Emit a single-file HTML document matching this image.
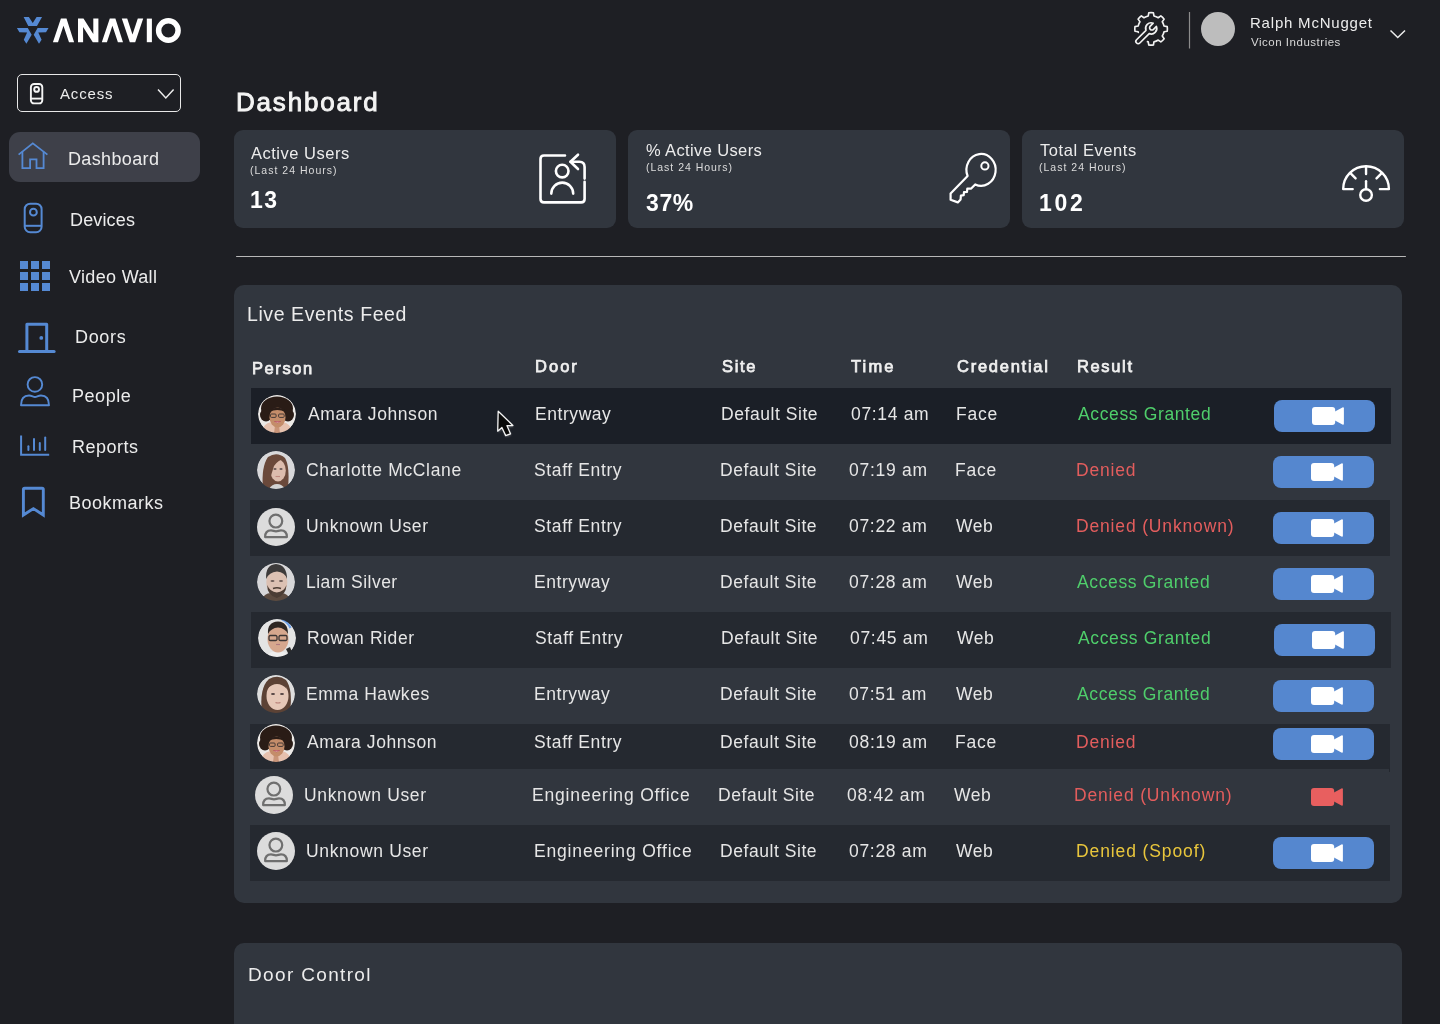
<!DOCTYPE html>
<html><head><meta charset="utf-8"><title>Anavio Dashboard</title>
<style>
html,body{margin:0;padding:0;}
body{width:1440px;height:1024px;overflow:hidden;background:#1e1f24;position:relative;font-family:"Liberation Sans", sans-serif;}
.t{position:absolute;white-space:nowrap;line-height:1;will-change:transform;}
svg{overflow:visible}
</style></head><body>
<svg width="0" height="0" style="position:absolute">
<defs>
<clipPath id="avc"><circle cx="0" cy="0" r="19"/></clipPath>
<symbol id="cam" viewBox="0 0 32 18" overflow="visible">
<rect x="0" y="0" width="23.2" height="18" rx="3"/>
<path d="M23,4.6 L30.4,0.4 Q31.9,-0.2 31.9,1.5 L31.9,16.5 Q31.9,18.2 30.4,17.6 L23,13.4 Z"/>
</symbol>
<g id="av-unknown">
<circle r="19" fill="#dcdcdc"/>
<circle cx="-0.15" cy="-5.9" r="6.4" fill="none" stroke="#6f6f6f" stroke-width="2.2"/>
<path d="M-10.9,10.1 L10.9,10.1 C10.9,5.5 8.5,3.4 5,3.4 C3,3.4 2,4.3 0,4.3 C-2,4.3 -3,3.4 -5,3.4 C-8.5,3.4 -10.9,5.5 -10.9,10.1 Z" fill="none" stroke="#6f6f6f" stroke-width="2.2" stroke-linejoin="round"/>
</g>
<filter id="soft" x="-10%" y="-10%" width="120%" height="120%"><feGaussianBlur stdDeviation="0.55"/></filter>
<g id="av-amara" clip-path="url(#avc)">
<g filter="url(#soft)">
<circle r="19" fill="#ece9e6"/>
<path d="M-16,19 Q-14,9 -5,8 L5,8 Q14,9 16,19 Z" fill="#e6c1ae"/>
<path d="M-2,12 L2,12 L3,19 L-3,19 Z" fill="#c99478"/>
<ellipse cx="0" cy="-5.5" rx="16" ry="12" fill="#2a1e19"/>
<ellipse cx="-11" cy="1" rx="6" ry="6.5" fill="#2a1e19"/>
<ellipse cx="11" cy="1" rx="6" ry="6.5" fill="#2a1e19"/>
<ellipse cx="0.5" cy="3.5" rx="8" ry="10" fill="#c48d6a"/>
<path d="M-7.5,-2 Q0,-6 8.5,-2 L8,-4 Q0,-9 -7,-4 Z" fill="#2a1e19"/>
<rect x="-6.5" y="0" width="5.6" height="3.4" rx="1" fill="none" stroke="#463a36" stroke-width="1"/>
<rect x="1.6" y="0" width="5.6" height="3.4" rx="1" fill="none" stroke="#463a36" stroke-width="1"/>
<path d="M-2.5,7.5 Q0.5,10 3.5,7.5 Z" fill="#f4e8e8" stroke="#b84a5a" stroke-width="0.7"/>
</g></g>
<g id="av-charlotte" clip-path="url(#avc)">
<g filter="url(#soft)">
<circle r="19" fill="#d8d8da"/>
<path d="M-13,19 Q-15,-3 -8,-13 Q1,-19 9,-12 Q14,-4 12,19 Z" fill="#6b4a3a"/>
<ellipse cx="2" cy="0.5" rx="7.8" ry="11" fill="#dcbcad"/>
<path d="M-9,-11 Q-1,-16 8,-11 Q2,-10 -2,-4 Q-5,4 -6,12 L-9,8 Z" fill="#6b4a3a"/>
<path d="M-7,19 Q-4,14 1,14 Q6,14 9,19 Z" fill="#d3d3d3"/>
<ellipse cx="-1" cy="-1" rx="1.6" ry="0.9" fill="#6a5a58"/>
<ellipse cx="5" cy="-1" rx="1.6" ry="0.9" fill="#6a5a58"/>
<path d="M-0.5,6.5 L4,6.5" stroke="#c08a80" stroke-width="1.1"/>
</g></g>
<g id="av-liam" clip-path="url(#avc)">
<g filter="url(#soft)">
<circle r="19" fill="#d7d7d9"/>
<path d="M-15,19 Q-12,11 -5,11 L5,11 Q12,11 15,19 Z" fill="#5b4b40"/>
<ellipse cx="0.8" cy="0" rx="10.5" ry="13.5" fill="#dcc1b3"/>
<path d="M-9.8,-3 Q-11,-17 0,-18 Q11,-17 11,-3 Q9,-10 1,-10.5 Q-7,-10 -9.8,-3 Z" fill="#3e3b3a"/>
<path d="M-8.8,3 Q-9,13 0.8,16 Q10,13 10.5,3 Q8,10 0.8,10.5 Q-6,10 -8.8,3 Z" fill="#4c3d34"/>
<path d="M-3,6.5 Q1,5 5,6.5" stroke="#4c3d34" stroke-width="1.6" fill="none"/>
<ellipse cx="-3.5" cy="-1" rx="2" ry="1" fill="#6e5e58"/>
<ellipse cx="5" cy="-1" rx="2" ry="1" fill="#6e5e58"/>
</g></g>
<g id="av-rowan" clip-path="url(#avc)">
<g filter="url(#soft)">
<circle r="19" fill="#e4e4e4"/>
<path d="M-11,19 Q-8,13 1,13 Q10,13 12,19 Z" fill="#eeeeee"/>
<path d="M9,11 L13,19 L17,19 L13,9 Z" fill="#2a2a2a"/>
<ellipse cx="1" cy="1" rx="10.5" ry="13.5" fill="#d6a78e"/>
<path d="M-9,-4 Q-10,-16 1,-16.5 Q11,-16 11,-4 Q8,-10 1,-10.5 Q-6,-10 -9,-4 Z" fill="#2e2624"/>
<path d="M5,-18.5 Q11,-16 13.5,-10" stroke="#6ea0e8" stroke-width="2.2" fill="none"/>
<rect x="-8" y="-2.5" width="8" height="5" rx="1.3" fill="none" stroke="#3b3434" stroke-width="1.3"/>
<rect x="2" y="-2.5" width="8" height="5" rx="1.3" fill="none" stroke="#3b3434" stroke-width="1.3"/>
<path d="M-1,6.5 L3,6.5" stroke="#b07a80" stroke-width="1.1"/>
</g></g>
<g id="av-emma" clip-path="url(#avc)">
<g filter="url(#soft)">
<circle r="19" fill="#dedede"/>
<path d="M-14,19 Q-17,-6 -7,-15 Q2,-20 10,-14 Q17,-5 14,19 Z" fill="#5c4236"/>
<ellipse cx="1.5" cy="2" rx="11" ry="14" fill="#e6c8b8"/>
<path d="M-9,-5 Q-6,-14 2,-14 Q9,-13 11,-5 Q6,-10 1,-10 Q-4,-10 -9,-5 Z" fill="#5c4236"/>
<ellipse cx="-3" cy="0" rx="2" ry="1" fill="#504040"/>
<ellipse cx="6" cy="0" rx="2" ry="1" fill="#504040"/>
<path d="M-0.5,8.5 Q2,9.5 4.5,8.5" stroke="#b88078" stroke-width="1.2" fill="none"/>
</g></g>
</defs></svg>
<svg style="position:absolute;left:0;top:0" width="200" height="60" viewBox="0 0 200 60">
<g fill="#5589d3">
<polygon points="23.6,16.9 28.87,16.9 32.74,22.9 36.6,16.9 42.05,16.9 36.96,25.9 28.3,25.9"/>
<polygon points="16.9,28.0 27.8,28.0 31.7,34.85 26.4,43.8 23.8,39.8 27.1,32.4 19.4,32.2"/>
<polygon points="48.5,28.0 37.6,28.0 33.7,34.85 39.0,43.8 41.6,39.8 38.3,32.4 46.0,32.2"/>
</g>
<g fill="#ffffff">
<polygon points="52.9,42.2 60.9,18.6 66.5,18.6 74.1,42.2 69,42.2 63.5,25.7 58.0,42.2"/>
<polygon points="78,42.2 78,18.6 83.5,18.6 93.3,34 93.3,18.6 98.4,18.6 98.4,42.2 92.8,42.2 83.1,27.1 83.1,42.2"/>
<polygon points="101.8,42.2 109.8,18.6 115.4,18.6 123.0,42.2 117.9,42.2 112.4,25.7 106.9,42.2"/>
<polygon points="121.8,18.6 127.2,18.6 132.5,34.4 137.8,18.6 143.2,18.6 135.2,42.2 129.8,42.2"/>
<rect x="146.8" y="18.6" width="5.1" height="23.6"/>
</g>
<circle cx="168.35" cy="30.5" r="9.75" fill="none" stroke="#ffffff" stroke-width="5.5"/>
</svg>
<div style="position:absolute;left:17px;top:74px;width:161.5px;height:35.5px;border:1.5px solid #e8e8e8;border-radius:5px;"></div>
<svg style="position:absolute;left:0;top:70px" width="200" height="50" viewBox="0 70 200 50">
<rect x="30.9" y="84" width="11.4" height="19.4" rx="3.2" fill="none" stroke="#f4f4f4" stroke-width="1.9"/>
<line x1="30.9" y1="98.6" x2="42.3" y2="98.6" stroke="#f4f4f4" stroke-width="1.9"/>
<circle cx="36.6" cy="89.4" r="2.4" fill="none" stroke="#f4f4f4" stroke-width="1.9"/>
<polyline points="158,89.5 165.8,98 173.6,89.5" fill="none" stroke="#ececec" stroke-width="1.5"/>
</svg>
<div class="t" style="left:59.70px;top:86.20px;font-size:15px;font-weight:400;color:#ececec;letter-spacing:0.820px;">Access</div>
<div style="position:absolute;left:9px;top:132px;width:191px;height:50px;background:#3e4049;border-radius:11px;"></div>
<svg style="position:absolute;left:0;top:130px" width="220" height="400" viewBox="0 130 220 400">
<g fill="none" stroke="#5589d3" stroke-width="1.8" stroke-linejoin="miter">
<polyline points="18.6,154.6 32.8,143.4 47.4,154.6"/>
<polyline points="22.4,151.8 22.4,168.1 30.1,168.1 30.1,159.3 36.5,159.3 36.5,168.1 43.6,168.1 43.6,151.8"/>
<rect x="24.7" y="203.7" width="16.9" height="28.5" rx="5.5" stroke-width="2"/>
<line x1="24.7" y1="225.8" x2="41.6" y2="225.8" stroke-width="2"/>
<circle cx="33.4" cy="212.2" r="3.4" stroke-width="2"/>
</g>
<g fill="#5589d3">
<rect x="20" y="261" width="8" height="8"/><rect x="31" y="261" width="8" height="8"/><rect x="42" y="261" width="8" height="8"/>
<rect x="20" y="272" width="8" height="8"/><rect x="31" y="272" width="8" height="8"/><rect x="42" y="272" width="8" height="8"/>
<rect x="20" y="283" width="8" height="8"/><rect x="31" y="283" width="8" height="8"/><rect x="42" y="283" width="8" height="8"/>
</g>
<g fill="none" stroke="#5589d3" stroke-linecap="round">
<polyline points="26.9,350.5 26.9,324.3 46.7,324.3 46.7,350.5" stroke-width="3" stroke-linejoin="round"/>
<line x1="19.5" y1="351.6" x2="54.1" y2="351.6" stroke-width="3"/>
<circle cx="34.9" cy="384.4" r="7.3" stroke-width="1.9"/>
<path d="M21,405.2 L49,405.2 C49,399 46,395.5 41,395.5 C38,395.5 37,397 35,397 C33,397 32,395.5 29,395.5 C24,395.5 21,399 21,405.2 Z" stroke-width="1.9" stroke-linejoin="round"/>
<polyline points="21.1,435.5 21.1,454.8 49.2,454.8" stroke-width="2" stroke-linecap="butt"/>
<line x1="28.4" y1="446.3" x2="28.4" y2="450" stroke-width="2"/>
<line x1="34" y1="439" x2="34" y2="450" stroke-width="2"/>
<line x1="39.8" y1="442.9" x2="39.8" y2="450" stroke-width="2"/>
<line x1="45.2" y1="437.5" x2="45.2" y2="450" stroke-width="2"/>
<path d="M23.4,515 L23.4,489.6 Q23.4,488.3 24.7,488.3 L42,488.3 Q43.3,488.3 43.3,489.6 L43.3,515 L33.4,508.6 Z" stroke-width="2.9" stroke-linecap="butt" stroke-linejoin="miter"/>
</g>
<circle cx="41.3" cy="337.9" r="1.9" fill="#5589d3"/>
</svg>
<div class="t" style="left:67.60px;top:150.06px;font-size:18px;font-weight:400;color:#ececec;letter-spacing:0.363px;">Dashboard</div>
<div class="t" style="left:70.30px;top:210.86px;font-size:18px;font-weight:400;color:#ececec;letter-spacing:0.150px;">Devices</div>
<div class="t" style="left:69.40px;top:267.86px;font-size:18px;font-weight:400;color:#ececec;letter-spacing:0.322px;">Video Wall</div>
<div class="t" style="left:75.10px;top:328.36px;font-size:18px;font-weight:400;color:#ececec;letter-spacing:0.675px;">Doors</div>
<div class="t" style="left:72.30px;top:387.36px;font-size:18px;font-weight:400;color:#ececec;letter-spacing:0.540px;">People</div>
<div class="t" style="left:72.30px;top:438.26px;font-size:18px;font-weight:400;color:#ececec;letter-spacing:0.483px;">Reports</div>
<div class="t" style="left:69.30px;top:493.96px;font-size:18px;font-weight:400;color:#ececec;letter-spacing:0.500px;">Bookmarks</div>
<svg style="position:absolute;left:1120px;top:0" width="320" height="60" viewBox="1120 0 320 60">
<g fill="none" stroke="#f2f2f2" stroke-width="1.65" stroke-linejoin="round" stroke-linecap="round">
<path d="M1138.30,32.33 A13.25,13.25 0 0 1 1138.16,31.75 L1134.97,31.22 A16.3,16.3 0 0 1 1134.97,26.58 L1138.16,26.05 A13.25,13.25 0 0 1 1139.94,21.76 L1138.05,19.14 A16.3,16.3 0 0 1 1141.34,15.85 L1143.96,17.74 A13.25,13.25 0 0 1 1148.25,15.96 L1148.78,12.77 A16.3,16.3 0 0 1 1153.42,12.77 L1153.95,15.96 A13.25,13.25 0 0 1 1158.24,17.74 L1160.86,15.85 A16.3,16.3 0 0 1 1164.15,19.14 L1162.26,21.76 A13.25,13.25 0 0 1 1164.04,26.05 L1167.23,26.58 A16.3,16.3 0 0 1 1167.23,31.22 L1164.04,31.75 A13.25,13.25 0 0 1 1162.26,36.04 L1164.15,38.66 A16.3,16.3 0 0 1 1160.86,41.95 L1158.24,40.06 A13.25,13.25 0 0 1 1153.95,41.84 L1153.42,45.03 A16.3,16.3 0 0 1 1148.78,45.03 L1148.25,41.84 A13.25,13.25 0 0 1 1147.45,41.64"/>
<g transform="translate(1151.2,28.4) rotate(-45)"><path d="M-5.1,-2.3 L-18.4,-2.3 A2.3,2.3 0 0 0 -18.4,2.3 L-5.1,2.3 A5.6,5.6 0 0 0 5.1,2.3 L1.0,2.3 A2.3,2.3 0 0 1 1.0,-2.3 L5.1,-2.3 A5.6,5.6 0 0 0 -5.1,-2.3 Z"/></g>
</g>
<line x1="1189.5" y1="12" x2="1189.5" y2="48.5" stroke="#8c8c8c" stroke-width="1.2"/>
<circle cx="1218" cy="29" r="17" fill="#bdbdbd"/>
<polyline points="1390.5,30.5 1397.75,37.5 1405,30.5" fill="none" stroke="#ececec" stroke-width="1.5"/>
</svg>
<div class="t" style="left:1249.60px;top:15.40px;font-size:15px;font-weight:400;color:#ececec;letter-spacing:0.792px;">Ralph McNugget</div>
<div class="t" style="left:1251.25px;top:37.07px;font-size:11.5px;font-weight:400;color:#d8d8d8;letter-spacing:0.517px;">Vicon Industries</div>
<div class="t" style="left:235.60px;top:88.89px;font-size:26px;font-weight:400;color:#f4f4f4;letter-spacing:1.813px;-webkit-text-stroke:0.9px #f4f4f4;">Dashboard</div>
<div style="position:absolute;left:234px;top:130px;width:382px;height:98px;background:#31363e;border-radius:9px;"></div>
<div style="position:absolute;left:628px;top:130px;width:382px;height:98px;background:#31363e;border-radius:9px;"></div>
<div style="position:absolute;left:1022px;top:130px;width:382px;height:98px;background:#31363e;border-radius:9px;"></div>
<div class="t" style="left:250.60px;top:145.23px;font-size:16.5px;font-weight:400;color:#ececec;letter-spacing:0.509px;">Active Users</div>
<div class="t" style="left:249.60px;top:165.01px;font-size:10.5px;font-weight:400;color:#dcdcdc;letter-spacing:1.014px;">(Last 24 Hours)</div>
<div class="t" style="left:250.00px;top:189.33px;font-size:23px;font-weight:700;color:#ffffff;letter-spacing:1.400px;">13</div>
<div class="t" style="left:645.80px;top:142.23px;font-size:16.5px;font-weight:400;color:#ececec;letter-spacing:0.369px;">% Active Users</div>
<div class="t" style="left:645.80px;top:161.91px;font-size:10.5px;font-weight:400;color:#dcdcdc;letter-spacing:0.979px;">(Last 24 Hours)</div>
<div class="t" style="left:645.80px;top:191.53px;font-size:23px;font-weight:700;color:#ffffff;letter-spacing:0.600px;">37%</div>
<div class="t" style="left:1039.90px;top:141.83px;font-size:16.5px;font-weight:400;color:#ececec;letter-spacing:0.582px;">Total Events</div>
<div class="t" style="left:1038.90px;top:162.31px;font-size:10.5px;font-weight:400;color:#dcdcdc;letter-spacing:1.007px;">(Last 24 Hours)</div>
<div class="t" style="left:1038.90px;top:191.53px;font-size:23px;font-weight:700;color:#ffffff;letter-spacing:2.700px;">102</div>
<svg style="position:absolute;left:520px;top:140px" width="900" height="80" viewBox="520 140 900 80">
<g fill="none" stroke="#ffffff" stroke-width="2.6" stroke-linecap="round" stroke-linejoin="round">
<path d="M565,155.5 L544,155.5 Q540.5,155.5 540.5,159 L540.5,199 Q540.5,202.4 544,202.4 L581.2,202.4 Q584.6,202.4 584.6,199 L584.6,181.8"/>
<path d="M584.6,178.6 L584.6,167 Q584.6,161.8 579.4,161.8 L570.5,161.8"/>
<polyline points="578,154.7 570.5,161.8 578,169"/>
<circle cx="562.2" cy="171.1" r="6.3"/>
<path d="M551.3,193.6 A10.95,10.95 0 0 1 573.2,193.6"/>
</g>
<g fill="none" stroke="#ffffff" stroke-width="2.2" stroke-linejoin="round">
<path d="M967.6,176 L950.6,193.6 L950.6,199.8 L957.8,202.4 L960.6,199.4 L960.9,195.6 L963.7,195.2 L964,192.2 L967,191.8 L967.3,188.6 L971.2,188.6 L975.2,184.4 A14.6,15.9 0 1 0 967.6,176 Z"/>
<circle cx="984.9" cy="165.9" r="3.6" stroke-width="2"/>
</g>
<g fill="none" stroke="#ffffff" stroke-width="2.4" stroke-linecap="round">
<path d="M1352.7,189.1 L1343.2,189.1 A22.85,22.85 0 0 1 1388.9,189.1 L1379.9,189.1" stroke-linejoin="round"/>
<line x1="1366.05" y1="166.5" x2="1366.05" y2="174.1"/>
<line x1="1350.9" y1="173.6" x2="1355.6" y2="178.4"/>
<line x1="1381.2" y1="173.6" x2="1376.5" y2="178.4"/>
<line x1="1366.05" y1="181.2" x2="1366.05" y2="189"/>
<circle cx="1366.05" cy="195" r="5.8"/>
</g>
</svg>
<div style="position:absolute;left:236px;top:255.5px;width:1170px;height:1.5px;background:#b8b8b8;border-radius:1px;"></div>
<div style="position:absolute;left:234px;top:285px;width:1168px;height:618px;background:#31363e;border-radius:10px;"></div>
<div class="t" style="left:247.30px;top:304.74px;font-size:19.5px;font-weight:400;color:#ececec;letter-spacing:0.580px;">Live Events Feed</div>
<div class="t" style="left:251.50px;top:360.03px;font-size:16.5px;font-weight:400;color:#f0f0f0;letter-spacing:1.580px;-webkit-text-stroke:0.75px #f0f0f0;">Person</div>
<div class="t" style="left:535.00px;top:358.43px;font-size:16.5px;font-weight:400;color:#f0f0f0;letter-spacing:2.033px;-webkit-text-stroke:0.75px #f0f0f0;">Door</div>
<div class="t" style="left:722.20px;top:358.43px;font-size:16.5px;font-weight:400;color:#f0f0f0;letter-spacing:1.667px;-webkit-text-stroke:0.75px #f0f0f0;">Site</div>
<div class="t" style="left:851.40px;top:358.43px;font-size:16.5px;font-weight:400;color:#f0f0f0;letter-spacing:2.133px;-webkit-text-stroke:0.75px #f0f0f0;">Time</div>
<div class="t" style="left:957.40px;top:358.43px;font-size:16.5px;font-weight:400;color:#f0f0f0;letter-spacing:1.744px;-webkit-text-stroke:0.75px #f0f0f0;">Credential</div>
<div class="t" style="left:1077.20px;top:358.43px;font-size:16.5px;font-weight:400;color:#f0f0f0;letter-spacing:1.640px;-webkit-text-stroke:0.75px #f0f0f0;">Result</div>
<div style="position:absolute;left:251px;top:388px;width:1140px;height:56px;background:#1b1f27;border-radius:0px;"></div>
<div class="t" style="left:308.30px;top:405.69px;font-size:17.5px;font-weight:400;color:#e6e6e6;letter-spacing:0.575px;">Amara Johnson</div>
<div class="t" style="left:534.70px;top:405.69px;font-size:17.5px;font-weight:400;color:#e6e6e6;letter-spacing:0.557px;">Entryway</div>
<div class="t" style="left:720.70px;top:405.69px;font-size:17.5px;font-weight:400;color:#e6e6e6;letter-spacing:0.555px;">Default Site</div>
<div class="t" style="left:850.50px;top:405.69px;font-size:17.5px;font-weight:400;color:#e6e6e6;letter-spacing:0.671px;">07:14 am</div>
<div class="t" style="left:956.20px;top:405.69px;font-size:17.5px;font-weight:400;color:#e6e6e6;letter-spacing:0.767px;">Face</div>
<div class="t" style="left:1078.20px;top:405.69px;font-size:17.5px;font-weight:400;color:#4fce6b;letter-spacing:0.631px;">Access Granted</div>
<svg style="position:absolute;left:258.20px;top:395.00px" width="38" height="38" viewBox="-19 -19 38 38"><use href="#av-amara"/></svg>
<div style="position:absolute;left:1274px;top:400px;width:101px;height:32px;background:#5587cf;border-radius:8px;"></div>
<svg style="position:absolute;left:1312.30px;top:406.90px" width="32" height="18" viewBox="0 0 32 18"><use href="#cam" fill="#ffffff"/></svg>
<div class="t" style="left:306.10px;top:461.69px;font-size:17.5px;font-weight:400;color:#e6e6e6;letter-spacing:0.637px;">Charlotte McClane</div>
<div class="t" style="left:533.50px;top:461.69px;font-size:17.5px;font-weight:400;color:#e6e6e6;letter-spacing:0.620px;">Staff Entry</div>
<div class="t" style="left:719.50px;top:461.69px;font-size:17.5px;font-weight:400;color:#e6e6e6;letter-spacing:0.555px;">Default Site</div>
<div class="t" style="left:849.30px;top:461.69px;font-size:17.5px;font-weight:400;color:#e6e6e6;letter-spacing:0.714px;">07:19 am</div>
<div class="t" style="left:955.00px;top:461.69px;font-size:17.5px;font-weight:400;color:#e6e6e6;letter-spacing:0.767px;">Face</div>
<div class="t" style="left:1076.00px;top:461.69px;font-size:17.5px;font-weight:400;color:#e35d5d;letter-spacing:0.820px;">Denied</div>
<svg style="position:absolute;left:257.00px;top:451.00px" width="38" height="38" viewBox="-19 -19 38 38"><use href="#av-charlotte"/></svg>
<div style="position:absolute;left:1273px;top:456px;width:101px;height:32px;background:#5587cf;border-radius:8px;"></div>
<svg style="position:absolute;left:1311.10px;top:462.90px" width="32" height="18" viewBox="0 0 32 18"><use href="#cam" fill="#ffffff"/></svg>
<div style="position:absolute;left:250px;top:500px;width:1140px;height:56px;background:#252930;border-radius:0px;"></div>
<div class="t" style="left:306.10px;top:517.69px;font-size:17.5px;font-weight:400;color:#e6e6e6;letter-spacing:0.664px;">Unknown User</div>
<div class="t" style="left:533.50px;top:517.69px;font-size:17.5px;font-weight:400;color:#e6e6e6;letter-spacing:0.620px;">Staff Entry</div>
<div class="t" style="left:719.50px;top:517.69px;font-size:17.5px;font-weight:400;color:#e6e6e6;letter-spacing:0.555px;">Default Site</div>
<div class="t" style="left:849.30px;top:517.69px;font-size:17.5px;font-weight:400;color:#e6e6e6;letter-spacing:0.700px;">07:22 am</div>
<div class="t" style="left:956.00px;top:517.69px;font-size:17.5px;font-weight:400;color:#e6e6e6;letter-spacing:0.550px;">Web</div>
<div class="t" style="left:1076.00px;top:517.69px;font-size:17.5px;font-weight:400;color:#e35d5d;letter-spacing:0.840px;">Denied (Unknown)</div>
<svg style="position:absolute;left:257.00px;top:508.00px" width="38" height="38" viewBox="-19 -19 38 38"><use href="#av-unknown"/></svg>
<div style="position:absolute;left:1273px;top:512px;width:101px;height:32px;background:#5587cf;border-radius:8px;"></div>
<svg style="position:absolute;left:1311.10px;top:518.90px" width="32" height="18" viewBox="0 0 32 18"><use href="#cam" fill="#ffffff"/></svg>
<div class="t" style="left:306.10px;top:573.69px;font-size:17.5px;font-weight:400;color:#e6e6e6;letter-spacing:0.460px;">Liam Silver</div>
<div class="t" style="left:533.50px;top:573.69px;font-size:17.5px;font-weight:400;color:#e6e6e6;letter-spacing:0.557px;">Entryway</div>
<div class="t" style="left:719.50px;top:573.69px;font-size:17.5px;font-weight:400;color:#e6e6e6;letter-spacing:0.555px;">Default Site</div>
<div class="t" style="left:849.30px;top:573.69px;font-size:17.5px;font-weight:400;color:#e6e6e6;letter-spacing:0.686px;">07:28 am</div>
<div class="t" style="left:956.00px;top:573.69px;font-size:17.5px;font-weight:400;color:#e6e6e6;letter-spacing:0.550px;">Web</div>
<div class="t" style="left:1077.00px;top:573.69px;font-size:17.5px;font-weight:400;color:#4fce6b;letter-spacing:0.631px;">Access Granted</div>
<svg style="position:absolute;left:257.00px;top:563.00px" width="38" height="38" viewBox="-19 -19 38 38"><use href="#av-liam"/></svg>
<div style="position:absolute;left:1273px;top:568px;width:101px;height:32px;background:#5587cf;border-radius:8px;"></div>
<svg style="position:absolute;left:1311.10px;top:574.90px" width="32" height="18" viewBox="0 0 32 18"><use href="#cam" fill="#ffffff"/></svg>
<div style="position:absolute;left:251px;top:612px;width:1140px;height:56px;background:#252930;border-radius:0px;"></div>
<div class="t" style="left:307.10px;top:629.69px;font-size:17.5px;font-weight:400;color:#e6e6e6;letter-spacing:0.590px;">Rowan Rider</div>
<div class="t" style="left:534.50px;top:629.69px;font-size:17.5px;font-weight:400;color:#e6e6e6;letter-spacing:0.620px;">Staff Entry</div>
<div class="t" style="left:720.50px;top:629.69px;font-size:17.5px;font-weight:400;color:#e6e6e6;letter-spacing:0.555px;">Default Site</div>
<div class="t" style="left:850.30px;top:629.69px;font-size:17.5px;font-weight:400;color:#e6e6e6;letter-spacing:0.686px;">07:45 am</div>
<div class="t" style="left:957.00px;top:629.69px;font-size:17.5px;font-weight:400;color:#e6e6e6;letter-spacing:0.550px;">Web</div>
<div class="t" style="left:1078.00px;top:629.69px;font-size:17.5px;font-weight:400;color:#4fce6b;letter-spacing:0.631px;">Access Granted</div>
<svg style="position:absolute;left:258.00px;top:619.00px" width="38" height="38" viewBox="-19 -19 38 38"><use href="#av-rowan"/></svg>
<div style="position:absolute;left:1274px;top:624px;width:101px;height:32px;background:#5587cf;border-radius:8px;"></div>
<svg style="position:absolute;left:1312.10px;top:630.90px" width="32" height="18" viewBox="0 0 32 18"><use href="#cam" fill="#ffffff"/></svg>
<div class="t" style="left:306.10px;top:685.69px;font-size:17.5px;font-weight:400;color:#e6e6e6;letter-spacing:0.550px;">Emma Hawkes</div>
<div class="t" style="left:533.50px;top:685.69px;font-size:17.5px;font-weight:400;color:#e6e6e6;letter-spacing:0.557px;">Entryway</div>
<div class="t" style="left:719.50px;top:685.69px;font-size:17.5px;font-weight:400;color:#e6e6e6;letter-spacing:0.555px;">Default Site</div>
<div class="t" style="left:849.30px;top:685.69px;font-size:17.5px;font-weight:400;color:#e6e6e6;letter-spacing:0.629px;">07:51 am</div>
<div class="t" style="left:956.00px;top:685.69px;font-size:17.5px;font-weight:400;color:#e6e6e6;letter-spacing:0.550px;">Web</div>
<div class="t" style="left:1077.00px;top:685.69px;font-size:17.5px;font-weight:400;color:#4fce6b;letter-spacing:0.631px;">Access Granted</div>
<svg style="position:absolute;left:257.00px;top:675.00px" width="38" height="38" viewBox="-19 -19 38 38"><use href="#av-emma"/></svg>
<div style="position:absolute;left:1273px;top:680px;width:101px;height:32px;background:#5587cf;border-radius:8px;"></div>
<svg style="position:absolute;left:1311.10px;top:686.90px" width="32" height="18" viewBox="0 0 32 18"><use href="#cam" fill="#ffffff"/></svg>
<div style="position:absolute;left:250px;top:724px;width:1140px;height:45px;background:#252930;border-radius:0px;"></div>
<div class="t" style="left:307.10px;top:733.69px;font-size:17.5px;font-weight:400;color:#e6e6e6;letter-spacing:0.575px;">Amara Johnson</div>
<div class="t" style="left:533.50px;top:733.69px;font-size:17.5px;font-weight:400;color:#e6e6e6;letter-spacing:0.620px;">Staff Entry</div>
<div class="t" style="left:719.50px;top:733.69px;font-size:17.5px;font-weight:400;color:#e6e6e6;letter-spacing:0.555px;">Default Site</div>
<div class="t" style="left:849.30px;top:733.69px;font-size:17.5px;font-weight:400;color:#e6e6e6;letter-spacing:0.714px;">08:19 am</div>
<div class="t" style="left:955.00px;top:733.69px;font-size:17.5px;font-weight:400;color:#e6e6e6;letter-spacing:0.767px;">Face</div>
<div class="t" style="left:1076.00px;top:733.69px;font-size:17.5px;font-weight:400;color:#e35d5d;letter-spacing:0.820px;">Denied</div>
<svg style="position:absolute;left:257.00px;top:723.50px" width="38" height="38" viewBox="-19 -19 38 38"><use href="#av-amara"/></svg>
<div style="position:absolute;left:1273px;top:728.3px;width:101px;height:32px;background:#5587cf;border-radius:8px;"></div>
<svg style="position:absolute;left:1311.10px;top:735.20px" width="32" height="18" viewBox="0 0 32 18"><use href="#cam" fill="#ffffff"/></svg>
<div class="t" style="left:304.20px;top:786.69px;font-size:17.5px;font-weight:400;color:#e6e6e6;letter-spacing:0.664px;">Unknown User</div>
<div class="t" style="left:531.60px;top:786.69px;font-size:17.5px;font-weight:400;color:#e6e6e6;letter-spacing:0.824px;">Engineering Office</div>
<div class="t" style="left:717.60px;top:786.69px;font-size:17.5px;font-weight:400;color:#e6e6e6;letter-spacing:0.555px;">Default Site</div>
<div class="t" style="left:847.40px;top:786.69px;font-size:17.5px;font-weight:400;color:#e6e6e6;letter-spacing:0.700px;">08:42 am</div>
<div class="t" style="left:954.10px;top:786.69px;font-size:17.5px;font-weight:400;color:#e6e6e6;letter-spacing:0.550px;">Web</div>
<div class="t" style="left:1074.10px;top:786.69px;font-size:17.5px;font-weight:400;color:#e35d5d;letter-spacing:0.840px;">Denied (Unknown)</div>
<svg style="position:absolute;left:255.10px;top:776.00px" width="38" height="38" viewBox="-19 -19 38 38"><use href="#av-unknown"/></svg>
<svg style="position:absolute;left:1311.10px;top:788.10px" width="32" height="18" viewBox="0 0 32 18"><use href="#cam" fill="#e85f5f"/></svg>
<div style="position:absolute;left:250px;top:825px;width:1140px;height:55.5px;background:#252930;border-radius:0px;"></div>
<div class="t" style="left:306.10px;top:842.69px;font-size:17.5px;font-weight:400;color:#e6e6e6;letter-spacing:0.664px;">Unknown User</div>
<div class="t" style="left:533.50px;top:842.69px;font-size:17.5px;font-weight:400;color:#e6e6e6;letter-spacing:0.824px;">Engineering Office</div>
<div class="t" style="left:719.50px;top:842.69px;font-size:17.5px;font-weight:400;color:#e6e6e6;letter-spacing:0.555px;">Default Site</div>
<div class="t" style="left:849.30px;top:842.69px;font-size:17.5px;font-weight:400;color:#e6e6e6;letter-spacing:0.686px;">07:28 am</div>
<div class="t" style="left:956.00px;top:842.69px;font-size:17.5px;font-weight:400;color:#e6e6e6;letter-spacing:0.550px;">Web</div>
<div class="t" style="left:1076.00px;top:842.69px;font-size:17.5px;font-weight:400;color:#e9c63c;letter-spacing:0.885px;">Denied (Spoof)</div>
<svg style="position:absolute;left:257.00px;top:831.50px" width="38" height="38" viewBox="-19 -19 38 38"><use href="#av-unknown"/></svg>
<div style="position:absolute;left:1273px;top:837px;width:101px;height:32px;background:#5587cf;border-radius:8px;"></div>
<svg style="position:absolute;left:1311.10px;top:843.90px" width="32" height="18" viewBox="0 0 32 18"><use href="#cam" fill="#ffffff"/></svg>
<div style="position:absolute;left:1389px;top:768px;width:1px;height:4px;background:#23272e;border-radius:0px;"></div>
<svg style="position:absolute;left:490px;top:405px" width="30" height="40" viewBox="490 405 30 40"><defs><filter id="cs" x="-50%" y="-50%" width="200%" height="200%"><feGaussianBlur stdDeviation="1.2"/></filter></defs><path d="M498.2,411.2 L497.7,431.2 L501.9,427.5 L505.7,435.6 L510.5,433.8 L507,425.7 L512.9,425.5 Z" fill="#ffffff" opacity="0.35" filter="url(#cs)" transform="translate(0.5,1.2)"/><path d="M498.2,411.2 L497.7,431.2 L501.9,427.5 L505.7,435.6 L510.5,433.8 L507,425.7 L512.9,425.5 Z" fill="#0a0a0a" stroke="#f4f4f4" stroke-width="1.3" stroke-linejoin="round"/></svg>
<div style="position:absolute;left:234px;top:943px;width:1168px;height:120px;background:#31363e;border-radius:10px;"></div>
<div class="t" style="left:247.60px;top:964.92px;font-size:19px;font-weight:400;color:#ececec;letter-spacing:1.345px;">Door Control</div>

</body></html>
